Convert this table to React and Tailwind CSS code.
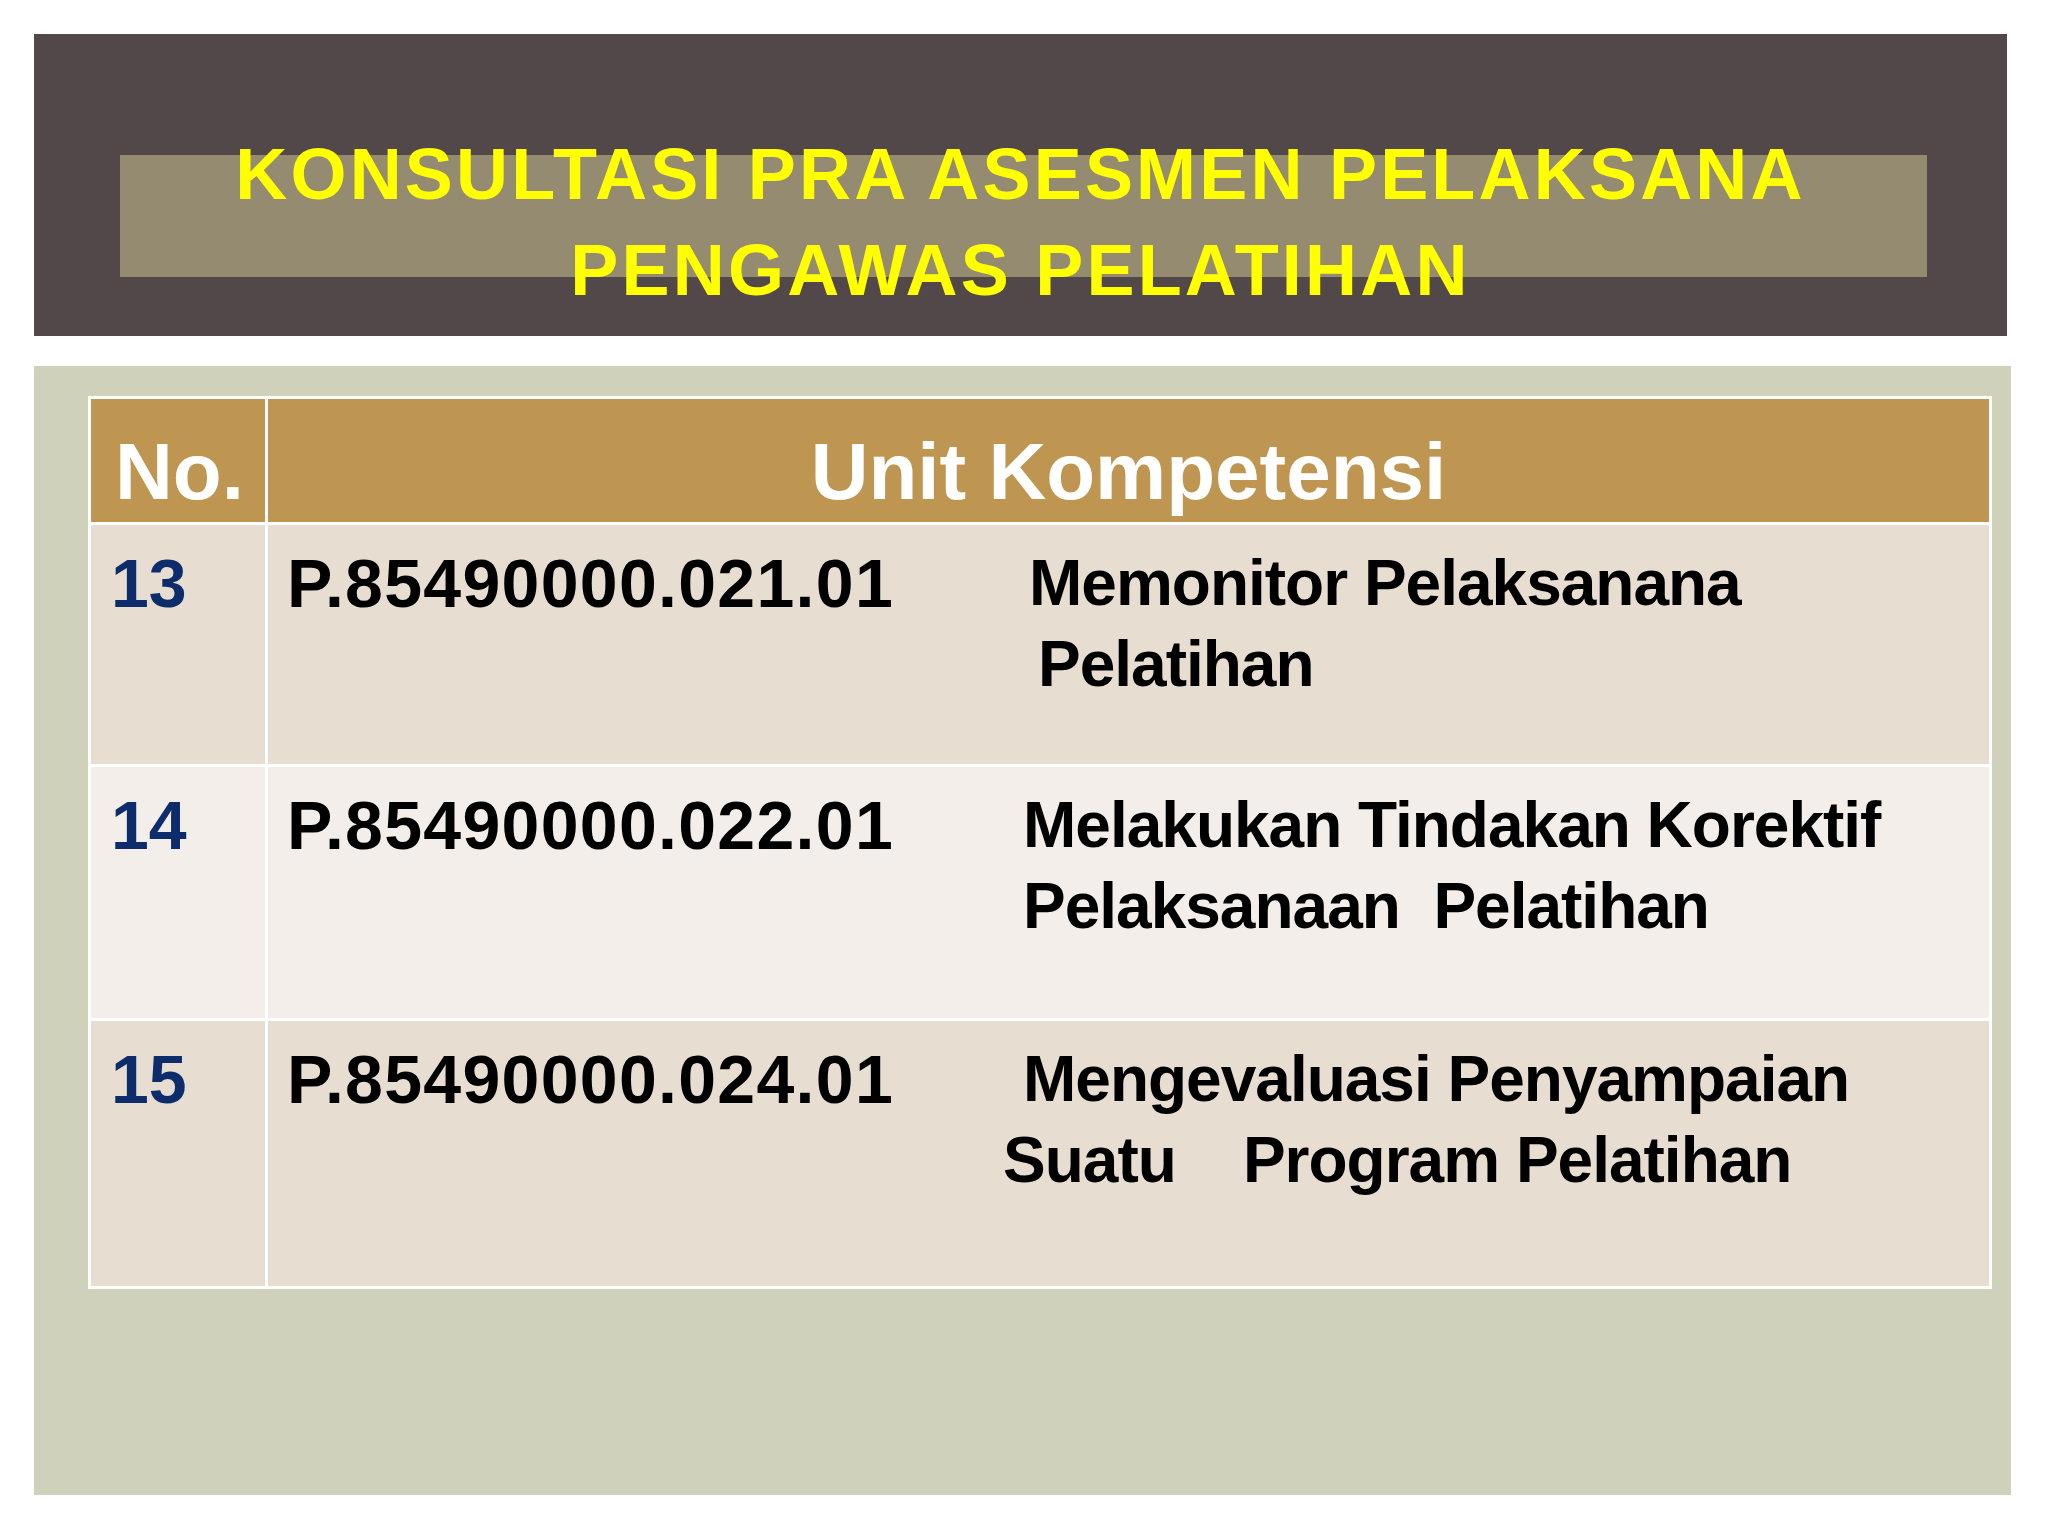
const rows = [
    {
        no: "13",
        code: "P.85490000.021.01",
        lines: [
            { text: "Memonitor Pelaksanana", indent: "ml-[26px]" },
            { text: "Pelatihan", indent: "ml-[35px]" },
        ],
        bg: "bg-[#e8ddd1]",
        height: "h-[239px]",
    },
    {
        no: "14",
        code: "P.85490000.022.01",
        lines: [
            { text: "Melakukan Tindakan Korektif", indent: "ml-[20px]" },
            { text: "Pelaksanaan  Pelatihan", indent: "ml-[20px]" },
        ],
        bg: "bg-[#f4eeea]",
        height: "h-[251px]",
    },
    {
        no: "15",
        code: "P.85490000.024.01",
        lines: [
            { text: "Mengevaluasi Penyampaian", indent: "ml-[20px]" },
            { text: "Suatu    Program Pelatihan", indent: "ml-0" },
        ],
        bg: "bg-[#e8ddd1]",
        height: "h-[265px]",
    },
];

const font = { fontFamily: '"Liberation Sans", Arial, sans-serif' };

const TitleBar = () => (
    <div className="relative h-[302px] w-[1973px] bg-[#534849]">
        {/* lighter band behind the title */}
        <div className="absolute left-[86px] top-[121px] h-[122px] w-[1807px] bg-[#958b70]" />
        <h1 className="relative pt-[92px] text-center text-[72px] font-bold leading-[96px] tracking-[3.2px] text-[#ffff00]">
            KONSULTASI PRA ASESMEN PELAKSANA
            <br />
            PENGAWAS PELATIHAN
        </h1>
    </div>
);

const Row = ({ row }) => (
    <div className={`grid grid-cols-[174px_1fr] gap-[3px] ${row.height}`}>
        <div className={`${row.bg} pl-[20px] pt-[18px] text-[68px] font-bold leading-[81px] text-[#0d2c6c]`}>
            {row.no}
        </div>
        <div className={`${row.bg} flex pl-[19px] pt-[18px] text-black`}>
            <span className="w-[716px] shrink-0 text-[68px] font-bold leading-[81px] tracking-[1.3px]">
                {row.code}
            </span>
            <div className="flex flex-col text-[64px] font-bold leading-[81px] tracking-[-1px]">
                {row.lines.map((l) => (
                    <span key={l.text} className={`whitespace-pre ${l.indent}`}>
                        {l.text}
                    </span>
                ))}
            </div>
        </div>
    </div>
);

export default function App() {
    return (
        <div className="min-h-[1536px] w-[2048px] bg-white pl-[34px] pt-[34px]" style={font}>
            <TitleBar />

            <div className="mt-[30px] h-[1129px] w-[1977px] bg-[#cfd1bb] pl-[54px] pt-[30px]">
                <div className="flex w-[1904px] flex-col gap-[3px] bg-white p-[3px]">
                    {/* header */}
                    <div className="grid h-[123px] grid-cols-[174px_1fr] gap-[3px]">
                        <div className="bg-[#bf9651] pl-[24px] pt-[33px] text-[80px] font-bold leading-[80px] text-white">
                            No.
                        </div>
                        <div className="bg-[#bf9651] pt-[33px] text-center text-[80px] font-bold leading-[80px] text-white">
                            Unit Kompetensi
                        </div>
                    </div>
                    {rows.map((r) => (
                        <Row key={r.no} row={r} />
                    ))}
                </div>
            </div>
        </div>
    );
}
